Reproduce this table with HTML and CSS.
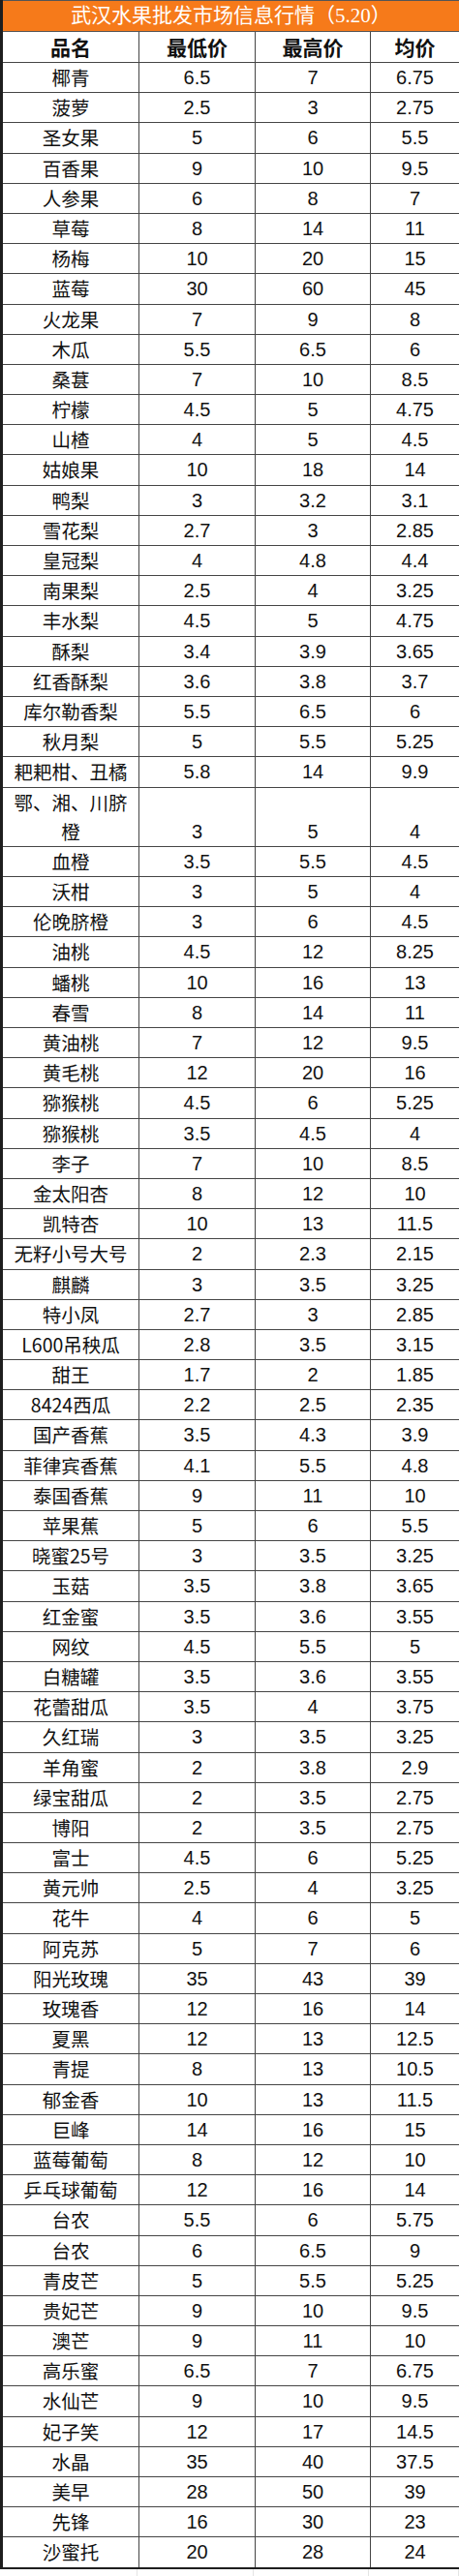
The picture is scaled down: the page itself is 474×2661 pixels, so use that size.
FILE: index.html
```html
<!DOCTYPE html>
<html lang="zh-CN">
<head>
<meta charset="utf-8">
<title>武汉水果批发市场信息行情</title>
<link rel="stylesheet" href="styles.css">
</head>
<body>
<div class="sheet">
<table class="prices">
<colgroup><col class="c1"><col class="c2"><col class="c3"><col class="c4"></colgroup>
<thead>
<tr class="title"><th colspan="4">武汉水果批发市场信息行情（5.20）</th></tr>
<tr class="head"><th>品名</th><th>最低价</th><th>最高价</th><th>均价</th></tr>
</thead>
<tbody>
<tr><td class="name">椰青</td><td>6.5</td><td>7</td><td>6.75</td></tr>
<tr><td class="name">菠萝</td><td>2.5</td><td>3</td><td>2.75</td></tr>
<tr><td class="name">圣女果</td><td>5</td><td>6</td><td>5.5</td></tr>
<tr><td class="name">百香果</td><td>9</td><td>10</td><td>9.5</td></tr>
<tr><td class="name">人参果</td><td>6</td><td>8</td><td>7</td></tr>
<tr><td class="name">草莓</td><td>8</td><td>14</td><td>11</td></tr>
<tr><td class="name">杨梅</td><td>10</td><td>20</td><td>15</td></tr>
<tr><td class="name">蓝莓</td><td>30</td><td>60</td><td>45</td></tr>
<tr><td class="name">火龙果</td><td>7</td><td>9</td><td>8</td></tr>
<tr><td class="name">木瓜</td><td>5.5</td><td>6.5</td><td>6</td></tr>
<tr><td class="name">桑葚</td><td>7</td><td>10</td><td>8.5</td></tr>
<tr><td class="name">柠檬</td><td>4.5</td><td>5</td><td>4.75</td></tr>
<tr><td class="name">山楂</td><td>4</td><td>5</td><td>4.5</td></tr>
<tr><td class="name">姑娘果</td><td>10</td><td>18</td><td>14</td></tr>
<tr><td class="name">鸭梨</td><td>3</td><td>3.2</td><td>3.1</td></tr>
<tr><td class="name">雪花梨</td><td>2.7</td><td>3</td><td>2.85</td></tr>
<tr><td class="name">皇冠梨</td><td>4</td><td>4.8</td><td>4.4</td></tr>
<tr><td class="name">南果梨</td><td>2.5</td><td>4</td><td>3.25</td></tr>
<tr><td class="name">丰水梨</td><td>4.5</td><td>5</td><td>4.75</td></tr>
<tr><td class="name">酥梨</td><td>3.4</td><td>3.9</td><td>3.65</td></tr>
<tr><td class="name">红香酥梨</td><td>3.6</td><td>3.8</td><td>3.7</td></tr>
<tr><td class="name">库尔勒香梨</td><td>5.5</td><td>6.5</td><td>6</td></tr>
<tr><td class="name">秋月梨</td><td>5</td><td>5.5</td><td>5.25</td></tr>
<tr><td class="name">耙耙柑、丑橘</td><td>5.8</td><td>14</td><td>9.9</td></tr>
<tr><td class="name">鄂、湘、川脐橙</td><td>3</td><td>5</td><td>4</td></tr>
<tr><td class="name">血橙</td><td>3.5</td><td>5.5</td><td>4.5</td></tr>
<tr><td class="name">沃柑</td><td>3</td><td>5</td><td>4</td></tr>
<tr><td class="name">伦晚脐橙</td><td>3</td><td>6</td><td>4.5</td></tr>
<tr><td class="name">油桃</td><td>4.5</td><td>12</td><td>8.25</td></tr>
<tr><td class="name">蟠桃</td><td>10</td><td>16</td><td>13</td></tr>
<tr><td class="name">春雪</td><td>8</td><td>14</td><td>11</td></tr>
<tr><td class="name">黄油桃</td><td>7</td><td>12</td><td>9.5</td></tr>
<tr><td class="name">黄毛桃</td><td>12</td><td>20</td><td>16</td></tr>
<tr><td class="name">猕猴桃</td><td>4.5</td><td>6</td><td>5.25</td></tr>
<tr><td class="name">猕猴桃</td><td>3.5</td><td>4.5</td><td>4</td></tr>
<tr><td class="name">李子</td><td>7</td><td>10</td><td>8.5</td></tr>
<tr><td class="name">金太阳杏</td><td>8</td><td>12</td><td>10</td></tr>
<tr><td class="name">凯特杏</td><td>10</td><td>13</td><td>11.5</td></tr>
<tr><td class="name">无籽小号大号</td><td>2</td><td>2.3</td><td>2.15</td></tr>
<tr><td class="name">麒麟</td><td>3</td><td>3.5</td><td>3.25</td></tr>
<tr><td class="name">特小凤</td><td>2.7</td><td>3</td><td>2.85</td></tr>
<tr><td class="name">L600吊秧瓜</td><td>2.8</td><td>3.5</td><td>3.15</td></tr>
<tr><td class="name">甜王</td><td>1.7</td><td>2</td><td>1.85</td></tr>
<tr><td class="name">8424西瓜</td><td>2.2</td><td>2.5</td><td>2.35</td></tr>
<tr><td class="name">国产香蕉</td><td>3.5</td><td>4.3</td><td>3.9</td></tr>
<tr><td class="name">菲律宾香蕉</td><td>4.1</td><td>5.5</td><td>4.8</td></tr>
<tr><td class="name">泰国香蕉</td><td>9</td><td>11</td><td>10</td></tr>
<tr><td class="name">苹果蕉</td><td>5</td><td>6</td><td>5.5</td></tr>
<tr><td class="name">晓蜜25号</td><td>3</td><td>3.5</td><td>3.25</td></tr>
<tr><td class="name">玉菇</td><td>3.5</td><td>3.8</td><td>3.65</td></tr>
<tr><td class="name">红金蜜</td><td>3.5</td><td>3.6</td><td>3.55</td></tr>
<tr><td class="name">网纹</td><td>4.5</td><td>5.5</td><td>5</td></tr>
<tr><td class="name">白糖罐</td><td>3.5</td><td>3.6</td><td>3.55</td></tr>
<tr><td class="name">花蕾甜瓜</td><td>3.5</td><td>4</td><td>3.75</td></tr>
<tr><td class="name">久红瑞</td><td>3</td><td>3.5</td><td>3.25</td></tr>
<tr><td class="name">羊角蜜</td><td>2</td><td>3.8</td><td>2.9</td></tr>
<tr><td class="name">绿宝甜瓜</td><td>2</td><td>3.5</td><td>2.75</td></tr>
<tr><td class="name">博阳</td><td>2</td><td>3.5</td><td>2.75</td></tr>
<tr><td class="name">富士</td><td>4.5</td><td>6</td><td>5.25</td></tr>
<tr><td class="name">黄元帅</td><td>2.5</td><td>4</td><td>3.25</td></tr>
<tr><td class="name">花牛</td><td>4</td><td>6</td><td>5</td></tr>
<tr><td class="name">阿克苏</td><td>5</td><td>7</td><td>6</td></tr>
<tr><td class="name">阳光玫瑰</td><td>35</td><td>43</td><td>39</td></tr>
<tr><td class="name">玫瑰香</td><td>12</td><td>16</td><td>14</td></tr>
<tr><td class="name">夏黑</td><td>12</td><td>13</td><td>12.5</td></tr>
<tr><td class="name">青提</td><td>8</td><td>13</td><td>10.5</td></tr>
<tr><td class="name">郁金香</td><td>10</td><td>13</td><td>11.5</td></tr>
<tr><td class="name">巨峰</td><td>14</td><td>16</td><td>15</td></tr>
<tr><td class="name">蓝莓葡萄</td><td>8</td><td>12</td><td>10</td></tr>
<tr><td class="name">乒乓球葡萄</td><td>12</td><td>16</td><td>14</td></tr>
<tr><td class="name">台农</td><td>5.5</td><td>6</td><td>5.75</td></tr>
<tr><td class="name">台农</td><td>6</td><td>6.5</td><td>9</td></tr>
<tr><td class="name">青皮芒</td><td>5</td><td>5.5</td><td>5.25</td></tr>
<tr><td class="name">贵妃芒</td><td>9</td><td>10</td><td>9.5</td></tr>
<tr><td class="name">澳芒</td><td>9</td><td>11</td><td>10</td></tr>
<tr><td class="name">高乐蜜</td><td>6.5</td><td>7</td><td>6.75</td></tr>
<tr><td class="name">水仙芒</td><td>9</td><td>10</td><td>9.5</td></tr>
<tr><td class="name">妃子笑</td><td>12</td><td>17</td><td>14.5</td></tr>
<tr><td class="name">水晶</td><td>35</td><td>40</td><td>37.5</td></tr>
<tr><td class="name">美早</td><td>28</td><td>50</td><td>39</td></tr>
<tr><td class="name">先锋</td><td>16</td><td>30</td><td>23</td></tr>
<tr><td class="name">沙蜜托</td><td>20</td><td>28</td><td>24</td></tr>
</tbody>
</table>
<div class="ghost"><span></span><span></span><span></span><span></span></div>
</div>
</body>
</html>
```
FILE: styles.css
```css
html, body {
  margin: 0;
  padding: 0;
  background: #ffffff;
}

body {
  font-family: "Liberation Sans", "Noto Sans CJK SC", sans-serif;
  color: #111111;
}

.sheet {
  width: 474px;
  overflow: hidden;
}

.prices {
  border-collapse: collapse;
  table-layout: fixed;
  width: 473px;
  border-top: 1px solid #1e1e1e;
  border-left: 3px solid #1e1e1e;
  border-bottom: 2px solid #1e1e1e;
  border-right: 1px solid #9a9a9a;
}

.c1 { width: 142px; }
.c2 { width: 120px; }
.c3 { width: 119px; }
.c4 { width: 92px; }

.title th {
  background: #f67a1a;
  color: #ffffff;
  font-family: "Liberation Serif", "Noto Sans CJK SC", serif;
  font-weight: 400;
  font-size: 21px;
  line-height: 31px;
  padding: 0;
  border: 1px solid #555555;
  border-left: 3px solid #1e1e1e;
}

.head th {
  font-family: "Noto Sans CJK SC", sans-serif;
  font-size: 21px;
  font-weight: 700;
  line-height: 31px;
  padding: 0;
  border: 1px solid #454545;
  color: #111111;
}

.prices td {
  font-size: 20px;
  line-height: 30.18px;
  text-align: center;
  vertical-align: bottom;
  padding: 0;
  border: 1px solid #454545;
}

.prices td.name {
  font-family: "Noto Sans CJK SC", sans-serif;
  font-size: 19.5px;
  padding: 0 8px;
}

.ghost {
  display: grid;
  grid-template-columns: 142px 120px 119px 93px;
  height: 12px;
}

.ghost span {
  border-right: 1px solid #e4e4e4;
}
```
